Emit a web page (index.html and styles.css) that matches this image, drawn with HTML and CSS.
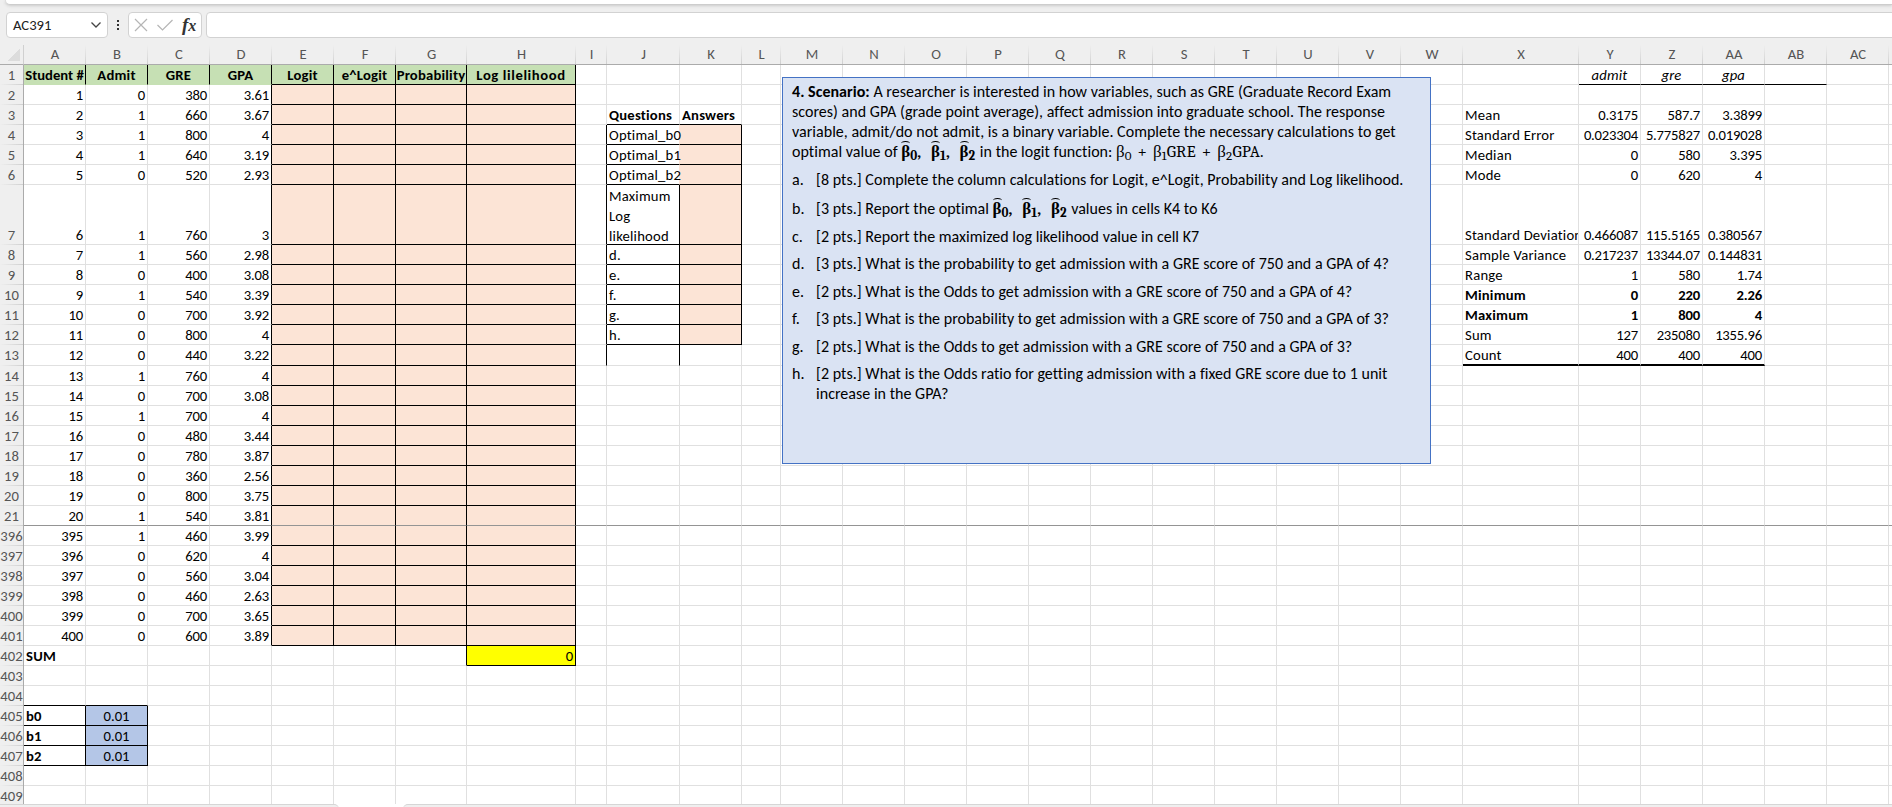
FILE: index.html
```html
<!DOCTYPE html>
<html lang="en">
<head>
    <meta charset="UTF-8">
    <meta name="viewport" content="width=device-width, initial-scale=1.0">
    <title>Admissions Logit Worksheet</title>
    <link rel="stylesheet" href="styles.css">
</head>
<body>
    <div class="ribbon"></div>

    <div class="formula-bar">
        <div class="name-box">
            <span>AC391</span>
            <svg class="chevron" width="12" height="8" viewBox="0 0 12 8"><path d="M1.5 1.5 L6 6 L10.5 1.5" /></svg>
        </div>
        <svg class="dots" width="4" height="14" viewBox="0 0 4 14"><path d="M1 2h2v2h-2z M1 6h2v2h-2z M1 10h2v2h-2z" /></svg>
        <div class="fx-box">
            <svg width="14" height="14" viewBox="0 0 14 14"><path d="M1 1 L13 13 M13 1 L1 13" /></svg>
            <svg width="18" height="14" viewBox="0 0 18 14"><path d="M1.5 7 L6.5 12 L16.5 2" /></svg>
            <span class="fx">f<span class="x">x</span></span>
        </div>
        <div class="formula-input"></div>
    </div>

    <div class="sheet">
        <table id="grid">
            <colgroup></colgroup>
            <thead></thead>
            <tbody></tbody>
        </table>

        <div class="text-box">
            <p><b>4. Scenario:</b> A researcher is interested in how variables, such as GRE (Graduate Record Exam</p>
            <p>scores) and GPA (grade point average), affect admission into graduate school. The response</p>
            <p class="tight">variable, admit/do not admit, is a binary variable. Complete the necessary calculations to get</p>
            <p class="formula">optimal value of <span class="hats"><span class="hat">β</span><sub>0</sub>, <span class="hat">β</span><sub>1</sub>, <span class="hat">β</span><sub>2</sub></span> in the logit function: <span class="math">β<sub>0</sub> + β<sub>1</sub>GRE + β<sub>2</sub>GPA.</span></p>
            <ol>
                <li><span>[8 pts.] Complete the column calculations for Logit, e^Logit, Probability and Log likelihood.</span></li>
                <li><span>[3 pts.] Report the optimal <span class="hats"><span class="hat">β</span><sub>0</sub>, <span class="hat">β</span><sub>1</sub>, <span class="hat">β</span><sub>2</sub></span> values in cells K4 to K6</span></li>
                <li><span>[2 pts.] Report the maximized log likelihood value in cell K7</span></li>
                <li><span>[3 pts.] What is the probability to get admission with a GRE score of 750 and a GPA of 4?</span></li>
                <li><span>[2 pts.] What is the Odds to get admission with a GRE score of 750 and a GPA of 4?</span></li>
                <li><span>[3 pts.] What is the probability to get admission with a GRE score of 750 and a GPA of 3?</span></li>
                <li><span>[2 pts.] What is the Odds to get admission with a GRE score of 750 and a GPA of 3?</span></li>
                <li><span>[2 pts.] What is the Odds ratio for getting admission with a fixed GRE score due to 1 unit<br>increase in the GPA?</span></li>
            </ol>
        </div>
    </div>

    <div class="tab-bar">
        <div class="tab-side start"></div>
        <div class="tab-side end"></div>
    </div>

    <script src="script.js"></script>
</body>
</html>
```
FILE: styles.css
```css
* {
    box-sizing: border-box;
}
body {
    margin: 0;
    width: 100vw;
    height: 100vh;
    overflow: hidden;
    background-color: #efefef;
    font-family: Calibri, Carlito, Lato, sans-serif;
    font-size: 14.67px;
    font-variant-ligatures: none;
    color: #000;
    display: flex;
    flex-direction: column;
}
.ribbon {
    flex: none;
    height: 5px;
    margin-left: 5px;
    background-color: #fff;
    border-bottom: 1px solid #cdcdcd;
    border-left: 1px solid #dcdcdc;
    border-bottom-left-radius: 6px;
    box-shadow: 0 1px 3px #ccc;
}
.formula-bar {
    flex: none;
    height: 40px;
    padding: 7px 0 7px 6px;
    display: flex;
}
.name-box, .fx-box, .formula-input {
    height: 26px;
    background-color: #fff;
    border: 1px solid #d2d2d2;
    border-radius: 4px;
    display: flex;
    align-items: center;
}
.name-box {
    width: 102px;
    padding: 0 5px 0 6px;
    justify-content: space-between;
    color: #222;
}
.chevron {
    fill: none;
    stroke: #444;
    stroke-width: 1.3;
}
.dots {
    margin: 6px 8px 0;
    fill: #333;
}
.fx-box {
    width: 74px;
    padding: 0 4px 0 5px;
    gap: 8px;
}
.fx-box svg {
    flex: none;
    fill: none;
    stroke: #b5b5b5;
    stroke-width: 1.2;
}
.fx {
    font-family: "Liberation Serif", serif;
    font-style: italic;
    font-weight: bold;
    font-size: 19px;
    line-height: 20px;
    color: #333;
}
.fx .x {
    font-size: 16px;
}
.formula-input {
    flex: 1;
    margin-left: 4px;
    margin-right: -6px;
}

/* grid */
.sheet {
    position: relative;
    height: 759px;
    overflow: hidden;
}
table {
    table-layout: fixed;
    border-collapse: separate;
    border-spacing: 0;
    width: 0;
}
td, th {
    height: 20px;
    padding: 0 2px;
    line-height: 17px;
    white-space: nowrap;
    vertical-align: bottom;
}
td {
    background-color: #fff;
    border-right: 1px solid #e0e0e0;
    border-bottom: 1px solid #e0e0e0;
    text-align: right;
    letter-spacing: -0.2px;
}
th {
    font-weight: normal;
    color: #555;
    padding: 0;
    text-align: center;
}
thead th {
    line-height: 19px;
    border-bottom: 1px solid #ababab;
    background: linear-gradient(#efefef, #d0d0d0) right / 1px 100% no-repeat;
}
tbody th {
    padding-bottom: 1px;
    border-right: 1px solid #ababab;
    background: linear-gradient(to right, #efefef, #d0d0d0) bottom / 100% 1px no-repeat;
}
thead .corner {
    background: linear-gradient(135deg, transparent 50%, #dcdcdc 50%) 8px 4px / 12px 12px no-repeat;
    border-right: 1px solid #d0d0d0;
}
.tall td, .tall th {
    height: 60px;
}
.row13 td, .row13 th {
    height: 21px;
    padding-bottom: 1px;
}
.row13 th {
    padding-bottom: 2px;
}
.left {
    text-align: left;
    letter-spacing: 0.2px;
}
.center {
    text-align: center;
    padding: 0;
    letter-spacing: 0.2px;
}
.bold {
    font-weight: bold;
}
.italic {
    font-style: italic;
}
.narrow {
    letter-spacing: 0;
}
.wide {
    letter-spacing: 0.6px;
}
.green {
    background-color: #c6e0b4;
    border-bottom-color: #c6e0b4;
}
.peach {
    background-color: #fce4d6;
}
.blue {
    background-color: #b4c6e7;
    letter-spacing: 0;
}
.yellow {
    background-color: #ffff00;
}
.br {
    border-right-color: #000;
}
.bb {
    border-bottom-color: #000;
}
.row13 .thick {
    padding-bottom: 0;
    border-bottom: 2px solid #000;
}
.clip {
    overflow: hidden;
}
.spill {
    position: relative;
    z-index: 1;
    border-right-color: #fce4d6;
}
.wrap {
    height: 59px;
    padding-top: 1px;
    white-space: normal;
    line-height: 20px;
}
.freeze td {
    border-bottom-color: #949494;
}

/* scenario text box */
.text-box {
    position: absolute;
    left: 782px;
    top: 32px;
    width: 649px;
    height: 387px;
    padding: 4px 9px;
    background-color: #dae3f3;
    border: 1px solid #4472c4;
    font-size: 16px;
    line-height: 20px;
    letter-spacing: 0.025px;
    white-space: nowrap;
    z-index: 2;
}
.text-box p {
    margin: 0;
}
.text-box .tight {
    line-height: 19px;
}
.text-box .formula {
    margin-top: 1px;
}
.text-box ol {
    margin: 8px 0 0;
    padding-left: 24px;
    list-style: none;
    counter-reset: item;
}
.text-box li {
    margin-bottom: 7.5px;
    counter-increment: item;
    display: flex;
}
.text-box li:first-child {
    margin-bottom: 9px;
}
.text-box li::before {
    content: counter(item, lower-alpha) ".";
    flex: none;
    width: 24px;
    margin-left: -24px;
}
.text-box sub {
    font-size: 13px;
    line-height: 0;
    vertical-align: -3px;
}
.math, .hats {
    font-family: Cambria, Caladea, "Liberation Serif", serif;
    font-size: 17px;
    line-height: 0;
}
.math {
    word-spacing: 2px;
    letter-spacing: 0.15px;
}
.hats {
    margin-right: 1px;
    font-weight: bold;
    word-spacing: 6px;
}
.hat {
    position: relative;
}
.hat::before {
    content: "";
    position: absolute;
    left: 0;
    top: -1px;
    width: 9px;
    height: 4px;
    border-top: 1px solid #000;
    border-radius: 50%;
}

/* sheet tabs */
.tab-bar {
    flex: none;
    height: 3px;
    background-color: #fff;
    display: flex;
    justify-content: space-between;
}
.tab-side {
    height: 6px;
    background-color: #efefef;
    border-top: 1px solid #d6d6d6;
}
.tab-side.start {
    width: 339px;
    border-top-right-radius: 5px;
}
.tab-side.end {
    width: 1489px;
    border-top-left-radius: 5px;
}
```
FILE: script.js
```js
const columns = [
    ['A', 62], ['B', 62], ['C', 62], ['D', 62], ['E', 62], ['F', 62], ['G', 71], ['H', 109],
    ['I', 31], ['J', 73], ['K', 62], ['L', 39], ['M', 62], ['N', 62], ['O', 62], ['P', 62],
    ['Q', 62], ['R', 62], ['S', 62], ['T', 62], ['U', 62], ['V', 62], ['W', 62], ['X', 116],
    ['Y', 62], ['Z', 62], ['AA', 62], ['AB', 62], ['AC', 62], ['', 62]
];

// row number, student, admit, gre, gpa
const students = [
    [2, 1, 0, 380, 3.61], [3, 2, 1, 660, 3.67], [4, 3, 1, 800, 4], [5, 4, 1, 640, 3.19],
    [6, 5, 0, 520, 2.93], [7, 6, 1, 760, 3], [8, 7, 1, 560, 2.98], [9, 8, 0, 400, 3.08],
    [10, 9, 1, 540, 3.39], [11, 10, 0, 700, 3.92], [12, 11, 0, 800, 4], [13, 12, 0, 440, 3.22],
    [14, 13, 1, 760, 4], [15, 14, 0, 700, 3.08], [16, 15, 1, 700, 4], [17, 16, 0, 480, 3.44],
    [18, 17, 0, 780, 3.87], [19, 18, 0, 360, 2.56], [20, 19, 0, 800, 3.75], [21, 20, 1, 540, 3.81],
    [396, 395, 1, 460, 3.99], [397, 396, 0, 620, 4], [398, 397, 0, 560, 3.04],
    [399, 398, 0, 460, 2.63], [400, 399, 0, 700, 3.65], [401, 400, 0, 600, 3.89]
];

const stats = [
    [3, 'Mean', '0.3175', '587.7', '3.3899'],
    [4, 'Standard Error', '0.023304', '5.775827', '0.019028'],
    [5, 'Median', '0', '580', '3.395'],
    [6, 'Mode', '0', '620', '4'],
    [7, 'Standard Deviation', '0.466087', '115.5165', '0.380567'],
    [8, 'Sample Variance', '0.217237', '13344.07', '0.144831'],
    [9, 'Range', '1', '580', '1.74'],
    [10, 'Minimum', '0', '220', '2.26'],
    [11, 'Maximum', '1', '800', '4'],
    [12, 'Sum', '127', '235080', '1355.96'],
    [13, 'Count', '400', '400', '400']
];

const cells = {};

function set(ref, text, cls) {
    const cell = cells[ref] = cells[ref] || { text: '', cls: '' };
    if (text !== '') cell.text = text;
    if (cls) cell.cls += ' ' + cls;
}

// header row
['Student #', 'Admit', 'GRE', 'GPA'].forEach((t, i) => set('ABCD'[i] + 1, t, 'green center bold br'));
['Logit', 'e^Logit', 'Probability', 'Log lilelihood'].forEach((t, i) => set('EFGH'[i] + 1, t, 'green center bold br bb'));
set('A1', '', 'narrow');
set('H1', '', 'wide');

students.forEach(([row, ...values]) => {
    values.forEach((v, i) => set('ABCD'[i] + row, v));
    set('D' + row, '', 'br');
    ['E', 'F', 'G', 'H'].forEach(c => set(c + row, '', 'peach br bb'));
});

// questions / answers
set('J3', 'Questions', 'left bold bb');
set('K3', 'Answers', 'left bold bb');
['Optimal_b0', 'Optimal_b1', 'Optimal_b2', '<div class="wrap">Maximum Log likelihood</div>', 'd.', 'e.', 'f.', 'g.', 'h.'].forEach((t, i) => {
    const row = i + 4;
    set('I' + row, '', 'br');
    set('J' + row, t, 'left bb ' + (row < 7 ? 'spill' : 'br'));
    set('K' + row, '', 'peach br bb');
});
set('I13', '', 'br');
set('J13', '', 'br');

// descriptive statistics
set('Y1', 'admit', 'center italic bb');
set('Z1', 'gre', 'center italic bb');
set('AA1', 'gpa', 'center italic bb');
set('AB1', '', 'bb');
stats.forEach(([row, ...values]) => {
    const extra = (row === 10 || row === 11 ? 'bold ' : '') + (row === 13 ? 'thick' : '');
    values.forEach((v, i) => set(['X', 'Y', 'Z', 'AA'][i] + row, v, (i === 0 ? 'left clip ' : '') + extra));
});

// totals and coefficients
set('A402', 'SUM', 'left bold');
set('G402', '', 'br');
set('H402', '0', 'yellow br bb');
set('A404', '', 'bb');
set('B404', '', 'bb');
['b0', 'b1', 'b2'].forEach((t, i) => {
    set('A' + (405 + i), t, 'left bold br bb');
    set('B' + (405 + i), '0.01', 'center blue br bb');
});

const table = document.getElementById('grid');
const colgroup = table.querySelector('colgroup');
const thead = table.querySelector('thead');
const tbody = table.querySelector('tbody');

let cols = '<col style="width:24px">';
let head = '<tr><th class="corner"></th>';
columns.forEach(([name, width]) => {
    cols += '<col style="width:' + width + 'px">';
    head += '<th>' + name + '</th>';
});
colgroup.innerHTML = cols;
thead.innerHTML = head + '</tr>';

const rows = [];
for (let r = 1; r <= 21; r++) rows.push(r);
for (let r = 396; r <= 409; r++) rows.push(r);

const rowClass = { 7: 'tall', 13: 'row13', 21: 'freeze' };

tbody.innerHTML = rows.map(r => {
    let html = '<tr class="' + (rowClass[r] || '') + '"><th>' + r + '</th>';
    columns.forEach(([name]) => {
        const cell = cells[name + r] || { text: '', cls: '' };
        html += '<td class="' + cell.cls.trim() + '">' + cell.text + '</td>';
    });
    return html + '</tr>';
}).join('');
```
